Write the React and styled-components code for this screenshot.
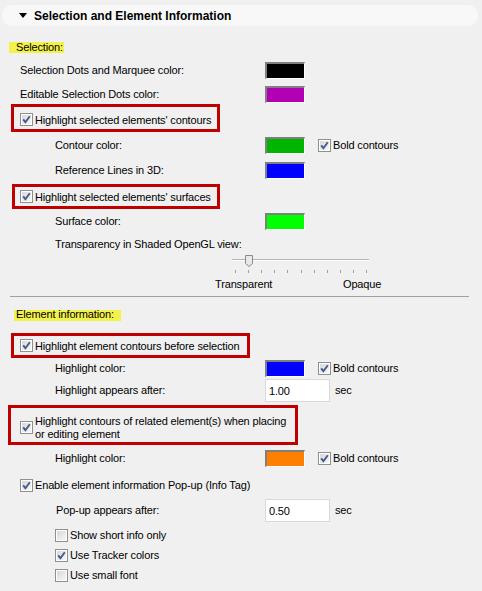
import React from 'react';
import styled, { createGlobalStyle } from 'styled-components';

const Global = createGlobalStyle`
  html, body { margin: 0; padding: 0; background: #f0f0f0; }
  body {
    font-family: "Liberation Sans", Arial, sans-serif;
    font-size: 11px;
    letter-spacing: -0.15px;
    color: #000;
  }
`;

const Panel = styled.div`
  width: 482px;
  height: 591px;
  box-sizing: border-box;
  padding-top: 5px;
  display: flex;
  flex-direction: column;
  overflow: hidden;
  background: #f0f0f0;
`;

const Header = styled.div`
  margin: 0 4px 0 2px;
  height: 21px;
  flex: none;
  border-radius: 11px;
  background: #f8f8f8;
  display: flex;
  align-items: center;
  gap: 7px;
  padding-left: 17px;
  font-weight: bold;
  font-size: 12px;
  letter-spacing: 0;
`;

const Triangle = styled.span`
  width: 0;
  height: 0;
  border-left: 4px solid transparent;
  border-right: 4px solid transparent;
  border-top: 5px solid #000;
  margin-top: -1px;
`;

const Row = styled.div`
  display: grid;
  grid-template-columns: 265px auto;
  align-items: center;
  flex: none;
  height: ${p => p.$h || 20}px;
  margin-top: ${p => p.$mt || 0}px;
`;

const Label = styled.span`
  padding-left: ${p => p.$indent || 20}px;
  white-space: nowrap;
`;

const Controls = styled.div`
  display: flex;
  align-items: center;
  gap: ${p => p.$gap ?? 13}px;
`;

const SectionRow = styled.div`
  display: flex;
  align-items: center;
  flex: none;
  height: 20px;
  margin-top: ${p => p.$mt || 0}px;
  padding-left: ${p => p.$left}px;
`;

const Mark = styled.span`
  display: inline-flex;
  align-items: center;
  box-sizing: border-box;
  height: ${p => p.$h}px;
  padding: 0 ${p => p.$pr}px ${p => p.$pb || 0}px ${p => p.$pl}px;
  background: #f2f24a;
  white-space: nowrap;
`;

const Swatch = styled.span`
  display: block;
  box-sizing: border-box;
  width: 40px;
  height: 17px;
  background: ${p => p.$color};
  border-top: 2px solid #7f7f7f;
  border-left: 2px solid #7f7f7f;
  border-right: 1px solid #ffffff;
  border-bottom: 1px solid #ffffff;
`;

const Field = styled.div`
  box-sizing: border-box;
  width: 65px;
  height: 23px;
  background: #fff;
  border: 1px solid #d9d9d9;
  display: flex;
  align-items: center;
  padding-left: 3px;
  padding-top: 1px;
`;

const Outline = styled.div`
  box-sizing: border-box;
  flex: none;
  width: ${p => p.$w}px;
  height: ${p => p.$h}px;
  margin-left: ${p => p.$left}px;
  margin-top: ${p => p.$mt || 0}px;
  padding-left: ${p => p.$pl}px;
  padding-top: ${p => p.$pt || 0}px;
  border: 3px solid #bf0000;
  display: flex;
  align-items: center;
`;

const CheckRow = styled.div`
  display: flex;
  align-items: center;
  flex: none;
  height: 20px;
  margin-top: ${p => p.$mt || 0}px;
  padding-left: ${p => p.$indent}px;
`;

const CheckLabel = styled.span`
  display: inline-flex;
  align-items: center;
  gap: 2px;
  white-space: nowrap;
`;

const Box = styled.span`
  display: block;
  flex: none;
  width: 13px;
  height: 13px;
`;

const TwoLine = styled.span`
  line-height: 13px;
  white-space: nowrap;
`;

const SliderRow = styled.div`
  flex: none;
  height: 22px;
  padding-left: 228px;
`;

const ScaleLabels = styled.div`
  flex: none;
  height: 16px;
  display: grid;
  grid-template-columns: 128px auto;
  align-items: center;
  padding-left: 215px;
`;

const Separator = styled.div`
  flex: none;
  height: 1px;
  margin: 4px 13px 0 10px;
  background: #a0a0a0;
`;

function Check({ checked }) {
  return (
    <Box>
      <svg width="13" height="13" viewBox="0 0 13 13">
        <defs>
          <linearGradient id="cbg" x1="0" y1="0" x2="1" y2="1">
            <stop offset="0" stopColor="#d8d8d8" />
            <stop offset="1" stopColor="#f7f7f7" />
          </linearGradient>
        </defs>
        <rect x="0.5" y="0.5" width="12" height="12" fill="#fff" stroke="#8e8f8f" />
        <rect x="2" y="2" width="9" height="9" fill="url(#cbg)" />
        {checked && (
          <path d="M3.2 6.4 L5.4 9.2 L9.8 3.2" fill="none" stroke="#44598f" strokeWidth="1.9" strokeLinejoin="miter" />
        )}
      </svg>
    </Box>
  );
}

function CheckItem({ checked = true, children }) {
  return (
    <CheckLabel>
      <Check checked={checked} />
      {children}
    </CheckLabel>
  );
}

function Slider() {
  const ticks = Array.from({ length: 11 }, (_, i) => 7 + i * 13.1);
  return (
    <SliderRow>
      <svg width="160" height="22" viewBox="0 0 160 22">
        <line x1="4" y1="5.5" x2="141" y2="5.5" stroke="#b4b4b4" />
        <line x1="4" y1="6.5" x2="141" y2="6.5" stroke="#ffffff" />
        {ticks.map((x, i) => (
          <line key={i} x1={Math.round(x) + 0.5} y1="16" x2={Math.round(x) + 0.5} y2="19" stroke="#a0a0a0" />
        ))}
        <path d="M17.5 1.5 H24.5 V9.5 L21 12.5 L17.5 9.5 Z" fill="#e9e9e9" stroke="#8a8a8a" />
      </svg>
    </SliderRow>
  );
}

export default function App() {
  return (
    <>
      <Global />
      <Panel>
        <Header>
          <Triangle />
          Selection and Element Information
        </Header>

        <SectionRow $mt={11} $left={9}>
          <Mark $h={11} $pl={7} $pr={1}>Selection:</Mark>
        </SectionRow>

        <Row $mt={3}>
          <Label>Selection Dots and Marquee color:</Label>
          <Controls><Swatch $color="#000000" /></Controls>
        </Row>
        <Row $mt={4}>
          <Label>Editable Selection Dots color:</Label>
          <Controls><Swatch $color="#b400b4" /></Controls>
        </Row>

        <Outline $w={209} $h={28} $left={11} $pl={6} $pt={3}>
          <CheckItem>Highlight selected elements' contours</CheckItem>
        </Outline>

        <Row $mt={3}>
          <Label $indent={55}>Contour color:</Label>
          <Controls>
            <Swatch $color="#00b400" />
            <CheckItem>Bold contours</CheckItem>
          </Controls>
        </Row>
        <Row $mt={5}>
          <Label $indent={55}>Reference Lines in 3D:</Label>
          <Controls><Swatch $color="#0000ff" /></Controls>
        </Row>

        <Outline $w={208} $h={25} $left={12} $pl={5} $mt={4}>
          <CheckItem>Highlight selected elements' surfaces</CheckItem>
        </Outline>

        <Row $mt={2}>
          <Label $indent={55}>Surface color:</Label>
          <Controls><Swatch $color="#00ff00" /></Controls>
        </Row>
        <Row $mt={3}>
          <Label $indent={55}>Transparency in Shaded OpenGL view:</Label>
        </Row>

        <Slider />
        <ScaleLabels>
          <span>Transparent</span>
          <span>Opaque</span>
        </ScaleLabels>

        <Separator />

        <SectionRow $mt={8} $left={14}>
          <Mark $h={11} $pl={2} $pr={7} $pb={2}>Element information:</Mark>
        </SectionRow>

        <Outline $w={239} $h={25} $left={11} $pl={6} $mt={8}>
          <CheckItem>Highlight element contours before selection</CheckItem>
        </Outline>

        <Row>
          <Label $indent={55}>Highlight color:</Label>
          <Controls>
            <Swatch $color="#0000ff" />
            <CheckItem>Bold contours</CheckItem>
          </Controls>
        </Row>
        <Row $h={24}>
          <Label $indent={55}>Highlight appears after:</Label>
          <Controls $gap={5}>
            <Field>1.00</Field>
            <span>sec</span>
          </Controls>
        </Row>

        <Outline $w={290} $h={40} $left={8} $pl={9} $mt={3} $pt={5}>
          <CheckItem>
            <TwoLine>
              Highlight contours of related element(s) when placing<br />or editing element
            </TwoLine>
          </CheckItem>
        </Outline>

        <Row $mt={3}>
          <Label $indent={55}>Highlight color:</Label>
          <Controls>
            <Swatch $color="#ff8000" />
            <CheckItem>Bold contours</CheckItem>
          </Controls>
        </Row>

        <CheckRow $mt={7} $indent={20}>
          <CheckItem>Enable element information Pop-up (Info Tag)</CheckItem>
        </CheckRow>

        <Row $h={24} $mt={3}>
          <Label $indent={56}>Pop-up appears after:</Label>
          <Controls $gap={5}>
            <Field>0.50</Field>
            <span>sec</span>
          </Controls>
        </Row>

        <CheckRow $mt={3} $indent={55}>
          <CheckItem checked={false}>Show short info only</CheckItem>
        </CheckRow>
        <CheckRow $indent={55}>
          <CheckItem>Use Tracker colors</CheckItem>
        </CheckRow>
        <CheckRow $indent={55}>
          <CheckItem checked={false}>Use small font</CheckItem>
        </CheckRow>
      </Panel>
    </>
  );
}
